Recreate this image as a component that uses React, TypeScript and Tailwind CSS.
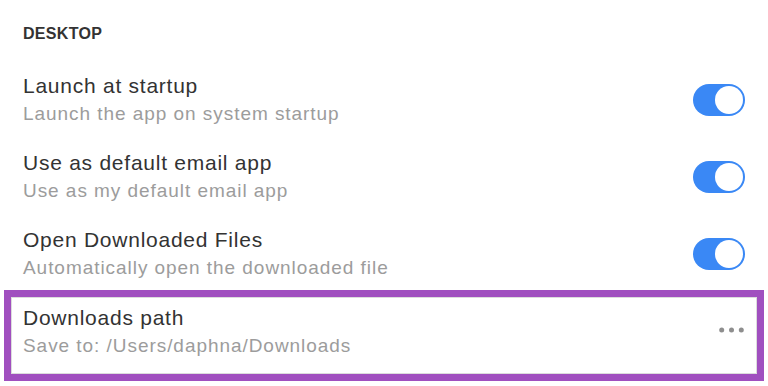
const font = { fontFamily: '"Liberation Sans", Arial, Helvetica, sans-serif' };

type Item = { title: string; subtitle: string };

const toggles: Item[] = [
  { title: 'Launch at startup', subtitle: 'Launch the app on system startup' },
  { title: 'Use as default email app', subtitle: 'Use as my default email app' },
  { title: 'Open Downloaded Files', subtitle: 'Automatically open the downloaded file' },
];

function Toggle() {
  return (
    <div className="flex h-[32px] w-[52px] shrink-0 items-center justify-end rounded-full bg-[#3a88f5] px-[2px]">
      <div className="h-[28px] w-[28px] rounded-full bg-white" />
    </div>
  );
}

function Text({ title, subtitle }: Item) {
  return (
    <div className="flex flex-col">
      <div className="text-[21px] leading-[28px] tracking-[0.75px] text-[#333333]">{title}</div>
      <div className="text-[19px] leading-[28px] tracking-[0.95px] text-[#9c9c9c]">{subtitle}</div>
    </div>
  );
}

export default function App() {
  return (
    <div className="h-[386px] w-[768px] overflow-hidden bg-white pt-[24px]" style={font}>
      <div className="px-[23px] text-[16px] font-bold leading-[20px] tracking-[0.3px] text-[#333333]">
        DESKTOP
      </div>

      <div className="mt-[17px]">
        {toggles.map((t) => (
          <div key={t.title} className="flex h-[77px] items-center justify-between px-[23px]">
            <Text {...t} />
            <Toggle />
          </div>
        ))}
      </div>

      {/* highlighted row */}
      <div className="mx-[4px] mt-[-2px] border-[7px] border-[#a04fbf]">
        <div className="flex items-start justify-between border border-[#dcdcdc] pb-[13px] pl-[11px] pr-[12px] pt-[6px]">
          <Text title="Downloads path" subtitle="Save to: /Users/daphna/Downloads" />
          <svg width="25" height="6" viewBox="0 0 25 6" className="mt-[23px]">
            <circle cx="2.7" cy="3" r="2.5" fill="#8e8e8e" />
            <circle cx="12.5" cy="3" r="2.5" fill="#8e8e8e" />
            <circle cx="22.3" cy="3" r="2.5" fill="#8e8e8e" />
          </svg>
        </div>
      </div>
    </div>
  );
}
